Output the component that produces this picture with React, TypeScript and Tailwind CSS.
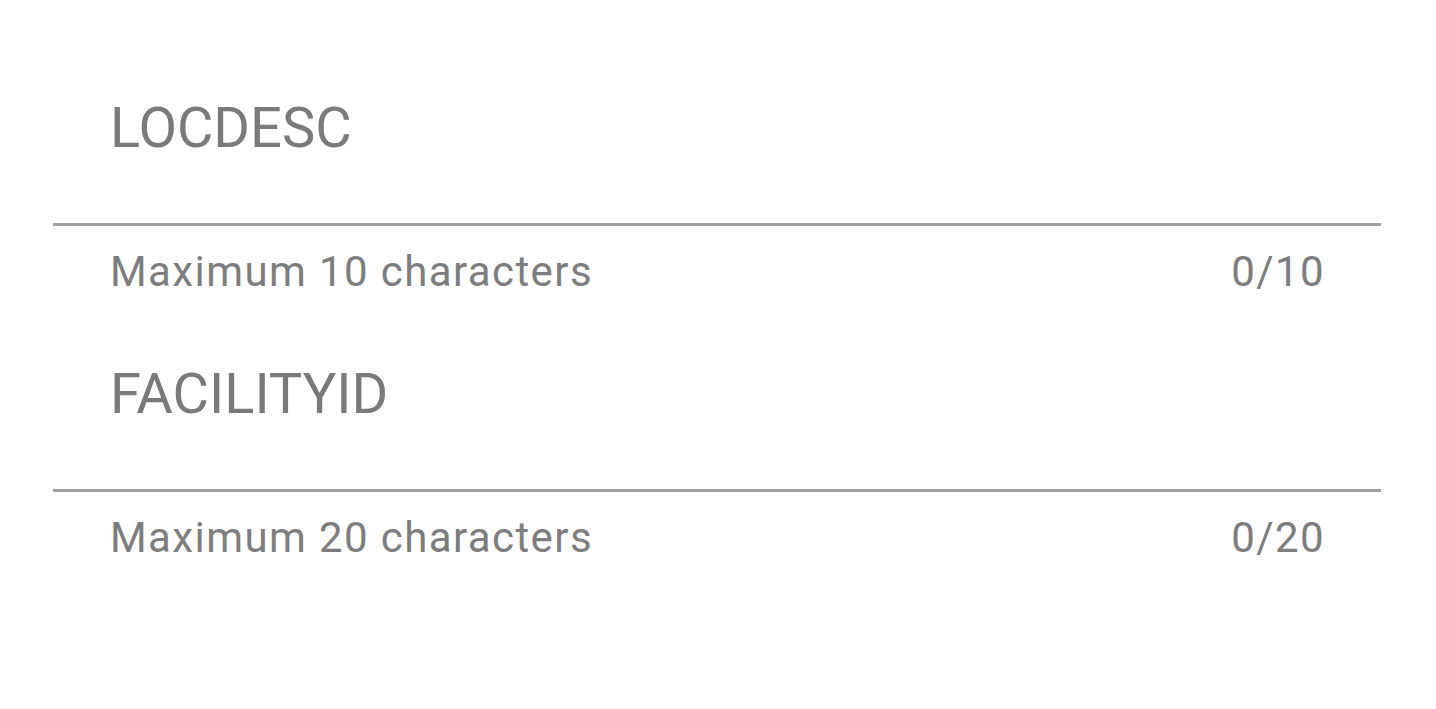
const fields = [
  { label: "LOCDESC", max: 10 },
  { label: "FACILITYID", max: 20 },
];

function TextField({ label, max }: { label: string; max: number }) {
  return (
    <div className="flex flex-col">
      <div className="px-[57px] text-[56px] leading-[66px] text-[#7a7a7a]">{label}</div>
      <div className="mt-[62px] h-[3px] bg-[#a0a0a0]" />
      <div className="mt-[21px] flex justify-between pl-[57px] pr-[56px] text-[42px] leading-[50px] tracking-[1.4px] text-[#7d7d7d]">
        <span>Maximum {max} characters</span>
        <span>0/{max}</span>
      </div>
    </div>
  );
}

export default function App() {
  return (
    <div className="min-h-[709px] w-full bg-white font-['Roboto',sans-serif]">
      <div className="flex flex-col gap-[64px] pl-[53px] pr-[55px] pt-[95px]">
        {fields.map((f) => (
          <TextField key={f.label} label={f.label} max={f.max} />
        ))}
      </div>
    </div>
  );
}
